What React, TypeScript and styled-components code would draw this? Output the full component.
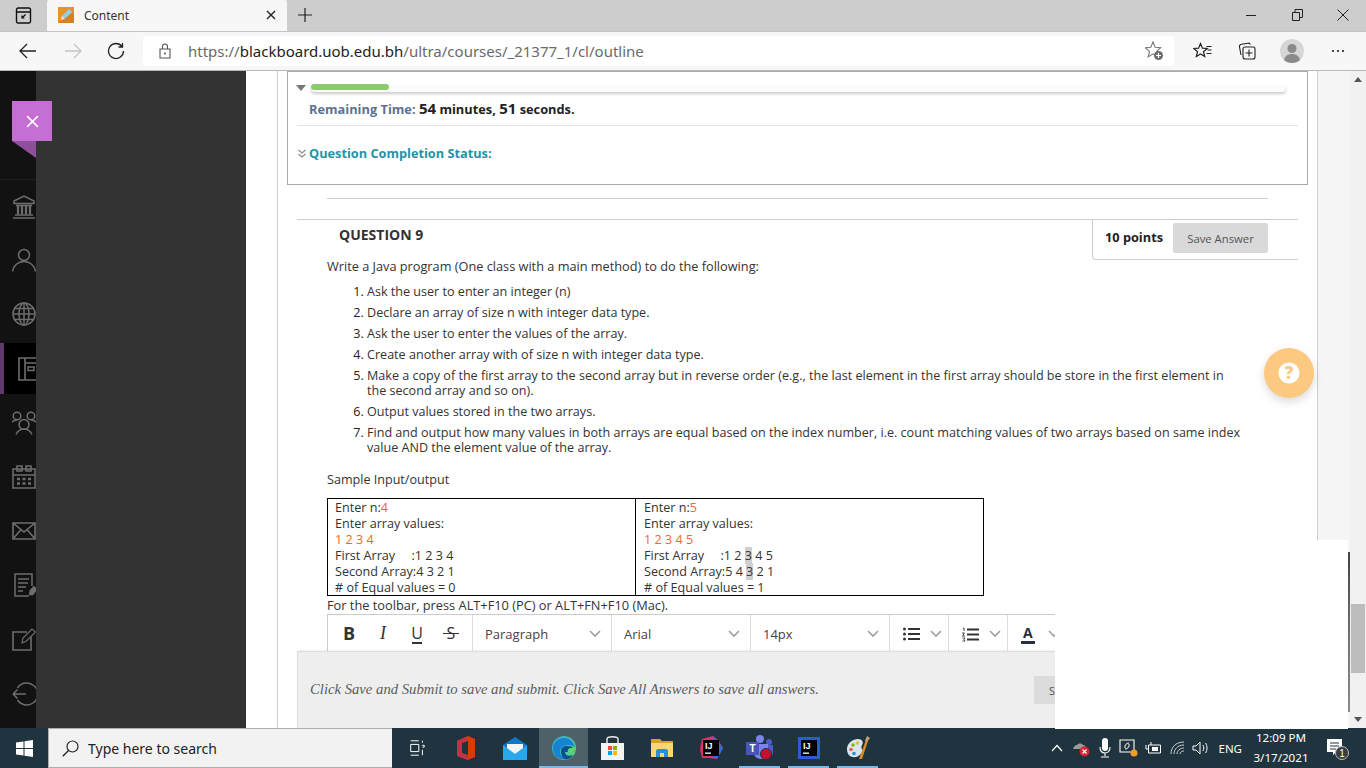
import React from "react";
import styled, { createGlobalStyle } from "styled-components";

const GlobalStyle = createGlobalStyle`
  html, body { margin: 0; padding: 0; background: #fff; }
  #root { width: 1366px; height: 768px; overflow: hidden; }
  * { box-sizing: border-box; }
`;

// window
//--------------------------
const Screen = styled.div`
  position: relative;
  width: 1366px;
  height: 768px;
  display: flex;
  flex-direction: column;
  overflow: hidden;
  font-family: "Open Sans", sans-serif;
`;

const TabStrip = styled.div`
  height: 32px;
  flex: none;
  display: flex;
  align-items: flex-end;
  background: #cdcdcd;
  padding-left: 15px;
  border-bottom: 1px solid #c4c4c4;
`;

const TabAction = styled.div`
  width: 32px;
  height: 32px;
  display: flex;
  align-items: center;
  justify-content: flex-start;
  color: #111;
`;

const Tab = styled.div`
  width: 240px;
  height: 32px;
  background: #f7f7f7;
  border-radius: 4px 4px 0 0;
  display: flex;
  align-items: center;
  padding: 0 11px;
  font-size: 12px;
  color: #333;
`;

const TabTitle = styled.span`
  flex: 1;
  margin-left: 10px;
  font-family: "Noto Sans", sans-serif;
`;

const NewTab = styled.div`
  margin-left: 10px;
  height: 32px;
  display: flex;
  align-items: center;
`;

const WindowControls = styled.div`
  margin-left: auto;
  display: flex;
  height: 32px;
`;

const WindowButton = styled.div`
  width: 46px;
  height: 32px;
  display: flex;
  align-items: center;
  justify-content: center;
`;

const NavBar = styled.div`
  height: 39px;
  flex: none;
  display: flex;
  align-items: center;
  background: #f7f7f7;
  border-bottom: 1px solid #b9b9b9;
  padding-left: 6px;
`;

const NavButton = styled.div<{ $w: number }>`
  width: ${(p) => p.$w}px;
  height: 30px;
  flex: none;
  display: flex;
  align-items: center;
  justify-content: center;
`;

const AddressBar = styled.div`
  width: 1031px;
  height: 30px;
  margin-left: 6px;
  background: #fff;
  border-radius: 4px;
  display: flex;
  align-items: center;
  padding-left: 16px;
  padding-right: 9px;
`;

const Url = styled.div`
  margin-left: 17px;
  flex: 1;
  font-family: "Noto Sans", sans-serif;
  font-size: 15px;
  color: #6a6a6a;
  white-space: nowrap;
`;

const UrlHost = styled.span`
  color: #222;
`;

// page
//--------------------------
const Main = styled.div`
  flex: 1;
  min-height: 0;
  display: flex;
`;

const Rail = styled.div`
  width: 36px;
  flex: none;
  background: #121212;
  padding-top: 105px;
  overflow: hidden;
  display: flex;
  flex-direction: column;
`;

const RailDivider = styled.div`
  height: 4px;
  flex: none;
  border-bottom: 1px solid #1e1e1e;
`;

const RailItem = styled.div<{ $h: number; $active?: boolean }>`
  height: ${(p) => p.$h}px;
  flex: none;
  width: 36px;
  display: flex;
  align-items: center;
  padding-left: ${(p) => (p.$active ? "14px" : "12px")};
  background: ${(p) => (p.$active ? "#000" : "transparent")};
  border-left: ${(p) => (p.$active ? "4px solid #63386e" : "none")};
  margin: ${(p) => (p.$active ? "2.500px 0 1.500px" : "0")};
  svg { flex: none; }
`;

const DarkPanel = styled.div`
  width: 210px;
  flex: none;
  background: #333;
`;

const CloseBadge = styled.div`
  position: absolute;
  left: 12px;
  top: 101px;
  width: 40px;
  height: 40px;
  background: #c56fd5;
  display: flex;
  align-items: center;
  justify-content: center;
  &::after {
    content: "";
    position: absolute;
    left: 0;
    top: 40px;
    width: 0;
    height: 0;
    border-top: 17px solid #8e4f9b;
    border-left: 24px solid transparent;
  }
`;

const LeftGutter = styled.div`
  width: 31px;
  flex: none;
  background: #fff;
`;

const RightGutter = styled.div`
  width: 32px;
  flex: none;
  background: #f5f5f5;
`;

const Sheet = styled.div`
  flex: 1;
  min-width: 0;
  display: flex;
  flex-direction: column;
  background: #fff;
  border-left: 1px solid #cfcfcf;
  border-right: 1px solid #cfcfcf;
`;

const Scroller = styled.div`
  flex: 1;
  min-height: 0;
  overflow: hidden;
  padding: 0 9px;
`;

const StatusBox = styled.div`
  height: 114px;
  border: 1px solid #aaa;
  padding: 0 9px 0 8px;
`;

const ProgressRow = styled.div`
  height: 26px;
  display: flex;
  align-items: flex-start;
  padding-top: 12px;
`;

const Caret = styled.div`
  width: 0;
  height: 0;
  border-left: 5px solid transparent;
  border-right: 5px solid transparent;
  border-top: 6px solid #777;
  margin-top: 1px;
`;

const Track = styled.div`
  width: 975px;
  height: 8px;
  margin-left: 5px;
  border-radius: 4px;
  background: #fbfbfb;
  box-shadow: 0 2px 3px rgba(0, 0, 0, 0.2);
`;

const Fill = styled.div`
  width: 78px;
  height: 6px;
  border-radius: 3px;
  background: #8cc96f;
`;

const TimeRow = styled.div`
  height: 28px;
  margin-left: 1px;
  padding-left: 12px;
  border-bottom: 1px solid #e4e4e4;
  width: 1001px;
  font-size: 12.8px;
  line-height: 20px;
  font-weight: 700;
  color: #222;
  white-space: nowrap;
`;

const TimeLabel = styled.span`
  color: #5d7093;
`;

const TimeNumber = styled.span`
  font-size: 15px;
`;

const CompletionRow = styled.div`
  display: flex;
  align-items: center;
  margin-top: 18px;
  height: 18px;
  gap: 3px;
  padding-left: 2px;
  font-size: 12.75px;
  font-weight: 700;
  color: #1f93a8;
`;

const Rule = styled.div`
  height: 1px;
  margin: 13px 40px 0 40px;
  background: #ccc;
`;

const Question = styled.div`
  margin: 20px 10px 0;
  border-top: 1px solid #ccc;
`;

const QuestionHead = styled.div`
  display: flex;
  justify-content: space-between;
  height: 40px;
`;

const QuestionTitle = styled.div`
  padding: 5px 0 0 42px;
  font-size: 14px;
  line-height: 20px;
  font-weight: 700;
  color: #333;
`;

const PointsBox = styled.div`
  width: 206px;
  height: 40px;
  display: flex;
  align-items: flex-start;
  padding: 3px 0 0 12px;
  border-left: 1px solid #ccc;
  border-bottom: 1px solid #ccc;
  border-bottom-left-radius: 4px;
`;

const Points = styled.div`
  font-size: 12.75px;
  line-height: 28px;
  font-weight: 700;
  color: #222;
  width: 68px;
`;

const SaveAnswer = styled.div`
  width: 95px;
  height: 30px;
  background: #d9d9d9;
  border-radius: 2px;
  display: flex;
  align-items: center;
  justify-content: center;
  font-size: 11.3px;
  color: #555;
`;

const Body = styled.div`
  padding-left: 30px;
  margin-top: -1px;
  font-size: 12.58px;
  line-height: 15px;
  color: #333;
`;

const Lead = styled.div`
  font-size: 12.74px;
  line-height: 15px;
`;

const Steps = styled.ol`
  margin: 10px 0 0;
  padding: 0 55px 0 40px;
  li { margin-bottom: 6px; }
  li::marker { color: #222; }
`;

const SampleLabel = styled.div`
  margin-top: 17px;
`;

const SampleTable = styled.div`
  display: grid;
  grid-template-columns: 307px 348px;
  width: 657px;
  height: 98px;
  margin-top: 11px;
  border: 1px solid #000;
`;

const SampleCell = styled.div`
  padding: 1px 0 0 7px;
  font-size: 12.6px;
  line-height: 16px;
  white-space: pre;
  color: #333;
  & + & {
    border-left: 1px solid #000;
    padding-left: 8px;
  }
`;

const Typed = styled.span`
  color: #f0662b;
`;

const Mark = styled.span`
  background: #cfcfcf;
`;

const Hint = styled.div`
  font-size: 12.8px;
  line-height: 18px;
`;

const Editor = styled.div`
  display: flex;
  align-items: stretch;
  height: 37px;
  width: 800px;
  border-top: 1px solid #ccc;
  border-left: 1px solid #ccc;
`;

const EditorGroup = styled.div<{ $w: number; $tight?: boolean }>`
  width: ${(p) => p.$w}px;
  flex: none;
  display: flex;
  align-items: center;
  justify-content: space-between;
  padding: 2px ${(p) => (p.$tight ? "6px" : "10px")} 0 ${(p) => (p.$tight ? "13px" : "12px")};
  border-right: 1px solid #ddd;
  font-size: 13px;
  color: #444;
`;

const StyleGroup = styled(EditorGroup)`
  padding: 0 10px;
`;

const StyleButton = styled.span<{ $serif?: boolean; $under?: boolean; $strike?: boolean }>`
  position: relative;
  width: 22px;
  text-align: center;
  font-family: ${(p) => (p.$serif ? '"Liberation Serif", serif' : '"Open Sans", sans-serif')};
  font-style: ${(p) => (p.$serif ? "italic" : "normal")};
  font-size: ${(p) => (p.$under || p.$strike ? "16px" : "18px")};
  font-weight: ${(p) => (p.$serif ? 400 : p.$under || p.$strike ? 400 : 700)};
  color: #333;
  ${(p) =>
    p.$under &&
    `&::after {
      content: "";
      position: absolute;
      left: 6px;
      right: 6px;
      bottom: -3px;
      height: 2px;
      background: #333;
    }`}
  ${(p) =>
    p.$strike &&
    `&::after {
      content: "";
      position: absolute;
      left: 3px;
      right: 3px;
      top: 7px;
      height: 1.5px;
      background: #333;
    }`}
`;

const ColorA = styled.span`
  font-size: 14px;
  font-weight: 700;
  line-height: 16px;
  color: #262f3d;
  border-bottom: 3px solid #262f3d;
  padding: 0 2px;
`;

const Footer = styled.div`
  height: 77px;
  flex: none;
  margin-left: 19px;
  background: #eee;
  border-top: 1px solid #ddd;
  border-left: 1px solid #ddd;
  display: flex;
  align-items: center;
  padding: 0 0 0 12px;
  box-shadow: 0 -1px 2px rgba(0, 0, 0, 0.06);
`;

const FooterNote = styled.div`
  width: 724px;
  flex: none;
  margin-bottom: 2px;
  font-family: "Liberation Serif", serif;
  font-style: italic;
  font-size: 14.7px;
  color: #5c5c5c;
  white-space: nowrap;
`;

const FooterButton = styled.div`
  width: 120px;
  height: 28px;
  background: #dcdcdc;
  display: flex;
  align-items: center;
  padding-left: 15px;
  font-size: 11px;
  color: #555;
  white-space: nowrap;
`;

const Scrollbar = styled.div`
  width: 16px;
  flex: none;
  background: #f1f1f1;
  display: flex;
  flex-direction: column;
  align-items: center;
  justify-content: space-between;
  padding: 6px 0 6px;
  position: relative;
`;

const ScrollThumb = styled.div`
  position: absolute;
  left: 1px;
  top: 533px;
  width: 14px;
  height: 69px;
  background: #bcbcbc;
`;

const Arrow = styled.div<{ $down?: boolean }>`
  width: 0;
  height: 0;
  border-left: 4px solid transparent;
  border-right: 4px solid transparent;
  ${(p) => (p.$down ? "border-top: 5px solid #555;" : "border-bottom: 5px solid #555;")}
`;

const HelpButton = styled.div`
  position: absolute;
  left: 1264px;
  top: 348px;
  width: 50px;
  height: 50px;
  border-radius: 50%;
  background: #fdc880;
  box-shadow: 0 4px 10px rgba(0, 0, 0, 0.14);
  display: flex;
  align-items: center;
  justify-content: center;
`;

// white patch lying over the page in the picture
const Patch = styled.div`
  position: absolute;
  left: 1055px;
  top: 540px;
  width: 293px;
  height: 189px;
  background: #fff;
  z-index: 5;
  &::after {
    content: "";
    position: absolute;
    left: 293px;
    top: 12px;
    width: 2px;
    height: 160px;
    background: linear-gradient(#444, #777 60%, #8a8a8a);
  }
`;

// taskbar
//--------------------------
const Taskbar = styled.div`
  height: 40px;
  flex: none;
  display: flex;
  align-items: stretch;
  background: #20343f;
`;

const StartButton = styled.div`
  width: 48px;
  display: flex;
  align-items: center;
  justify-content: center;
`;

const SearchBox = styled.div`
  width: 344px;
  background: #f2f2f2;
  border: 1px solid #a9b1b5;
  border-right: 0;
  display: flex;
  align-items: center;
  padding-left: 13px;
  gap: 9px;
  font-family: "Noto Sans", sans-serif;
  font-size: 14px;
  color: #222;
`;

const TaskItem = styled.div<{ $open?: boolean; $current?: boolean }>`
  width: 49px;
  flex: none;
  display: flex;
  align-items: center;
  justify-content: center;
  background: ${(p) => (p.$current ? "#4e6169" : "transparent")};
  box-shadow: ${(p) => (p.$open ? "inset 0 -2px 0 #76b9ed" : "none")};
  background-clip: padding-box;
  border: ${(p) => (p.$open ? "0 solid transparent" : "none")};
  border-width: ${(p) => (p.$open && !p.$current ? "0 4px" : "0")};
`;

const Tray = styled.div`
  margin-left: auto;
  display: flex;
  align-items: center;
  color: #fff;
`;

const TrayIcon = styled.div<{ $w: number }>`
  width: ${(p) => p.$w}px;
  display: flex;
  justify-content: center;
`;

const TrayText = styled.div`
  font-family: "Noto Sans", sans-serif;
  font-size: 11.5px;
  color: #fff;
  width: 33px;
  text-align: right;
`;

const Clock = styled.div`
  width: 78px;
  font-family: "Noto Sans", sans-serif;
  font-size: 11.6px;
  line-height: 20px;
  text-align: center;
  color: #fff;
`;

const Notify = styled.div`
  width: 46px;
  display: flex;
  padding-left: 5px;
`;

// icons
//--------------------------
const Ico = styled.svg`
  display: block;
  flex: none;
`;

const railStroke = { fill: "none", stroke: "#6e6e6e", strokeWidth: 1.5 };

const railIcons: React.ReactNode[] = [
  <g {...railStroke}>
    <path d="M2 6 12 1l10 5v2.500H2zM3 20h18M1 23h22M4 10.500h16" />
    <path d="M6 11v8M10 11v8M14 11v8M18 11v8" strokeWidth="2.200" />
  </g>,
  <g {...railStroke}>
    <circle cx="12" cy="7" r="5.500" />
    <path d="M0.500 23.500c1-6 5.500-10 11.500-10s10.500 4 11.500 10" />
  </g>,
  <g {...railStroke}>
    <circle cx="12" cy="12" r="11" />
    <ellipse cx="12" cy="12" rx="5" ry="11" />
    <path d="M12 1v22M1 12h22M2.500 6.500h19M2.500 17.500h19" />
  </g>,
  <g {...railStroke}>
    <path d="M1 1h24v22H1zM7 1v22M7 6h18" strokeWidth="1.600" />
    <rect x="10" y="10" width="6" height="3.500" />
  </g>,
  <g {...railStroke}>
    <circle cx="5" cy="5" r="3.800" />
    <circle cx="19" cy="5" r="3.800" />
    <circle cx="12" cy="13.500" r="5" />
    <path d="M0 11c1.500-1.500 3-2 5-2M24 11c-1.500-1.500-3-2-5-2M4 23.500c2-4 4.500-5.500 8-5.500s6 1.500 8 5.500" />
  </g>,
  <g {...railStroke}>
    <path d="M1 4h22v19H1zM1 10h22" />
    <rect x="5" y="1" width="5" height="5" />
    <rect x="14" y="1" width="5" height="5" />
    <path d="M5 14h3M10.500 14h3M16 14h3M5 18.500h3M10.500 18.500h3M16 18.500h3" strokeWidth="2.500" />
  </g>,
  <g {...railStroke}>
    <path d="M1 4h22v16H1zM1 4l11 9 11-9M1 20l8-9.500M23 20l-8-9.500" strokeWidth="1.600" />
  </g>,
  <g {...railStroke}>
    <path d="M20 13V1H3v22h14M6 6h11M6 10h10M6 14h8M6 18h5" />
    <path d="M17 22l1-5 4-4 2 2v3l-3 4z" fill="#6e6e6e" strokeWidth="0.500" />
  </g>,
  <g {...railStroke}>
    <path d="M19 10v13H1V5h14" strokeWidth="1.600" />
    <path d="M10 16l1-5 9-9 3.500 3-9 9z" strokeWidth="1.200" />
  </g>,
  <g {...railStroke}>
    <path d="M5.500 6A11 11 0 1 1 5.500 18M1 12h13M1 12l4.500-4.500M1 12l4.500 4.500" />
  </g>,
];

const Chevron = () => (
  <Ico width="12" height="8" viewBox="0 0 12 8">
    <path d="M1 1l5 5 5-5" fill="none" stroke="#9aa0a6" strokeWidth="1.600" />
  </Ico>
);

const Office = () => (
  <Ico width="20" height="24" viewBox="0 0 20 24">
    <path d="M1 5 12 0l7 3v18l-7 3-11-4z" fill="#d83b01" />
    <path d="M1 5 12 0v5L6 7v10l6 2v5L1 20z" fill="#c4314b" />
    <path d="M6 7l6-2v14l-6-2z" fill="#20343f" />
  </Ico>
);

const Mail = () => (
  <Ico width="24" height="24" viewBox="0 0 24 24">
    <path d="M0 9 12 1l12 8v14H0z" fill="#0f78c9" />
    <path d="M4 8h16v7l-8 3-8-3z" fill="#f4f4f4" />
    <path d="M0 9l12 9 12-9v15H0z" fill="#28a8ea" />
  </Ico>
);

const Edge = () => (
  <Ico width="24" height="24" viewBox="0 0 24 24">
    <defs>
      <linearGradient id="edgeA" x1="0" y1="0" x2="1" y2="1">
        <stop offset="0" stopColor="#2fa8dc" />
        <stop offset="1" stopColor="#60d96b" />
      </linearGradient>
    </defs>
    <circle cx="12" cy="12" r="12" fill="url(#edgeA)" />
    <path d="M1 14C0 7 6 2 12 2c5 0 9 3 11 9-3-2-7-3-11-1-4 2-5 6-3 9 1 2 4 4 7 4C8 25 2 21 1 14z" fill="#1684d3" />
    <path d="M9 15c0-3 3-5 6-5 4 0 6 1 8 3 0 2-1 3-3 3h-7c0 3 3 5 8 3-2 3-5 5-8 4-3-1-4-5-4-8z" fill="#0d4f95" />
    <path d="M23 11c1 3-1 5-3 5h-4c-1-2 1-4 3-4 2 0 3-1 4-1z" fill="#5ad86a" />
  </Ico>
);

const Store = () => (
  <Ico width="23" height="24" viewBox="0 0 23 24">
    <path d="M6 8V3c0-3 11-3 11 0v5" fill="none" stroke="#e8e8e8" strokeWidth="1.500" />
    <path d="M0 7h23v17H0z" fill="#f3f3f3" />
    <path d="M7 10h4v4H7z" fill="#f25022" />
    <path d="M12 10h4v4h-4z" fill="#7fba00" />
    <path d="M7 15h4v4H7z" fill="#00a4ef" />
    <path d="M12 15h4v4h-4z" fill="#ffb900" />
  </Ico>
);

const Explorer = () => (
  <Ico width="22" height="20" viewBox="0 0 22 20">
    <path d="M0 1h9l2 2h11v16H0z" fill="#d9a520" />
    <path d="M0 5h22v14H0z" fill="#f8d775" />
    <path d="M5 19v-6c0-1 1-2 2-2h8c1 0 2 1 2 2v6h-4v-4H9v4z" fill="#2a8fd9" />
  </Ico>
);

const Idea = ({ ring }: { ring?: boolean }) => (
  <Ico width="24" height="24" viewBox="0 0 24 24">
    {ring ? (
      <>
        <path d="M3 3l11-3 5 4 5 8-6 11-8-1H3L1 13z" fill="#e1316c" />
        <path d="M14 0l10 12-6 11-5-3z" fill="#2d6fdc" />
      </>
    ) : (
      <path d="M1 1h22v22H1z" fill="#2a5cd6" />
    )}
    <path d="M4 4h16v16H4z" fill="#000" />
    <text x="6" y="12.500" fontSize="9" fontWeight="700" fontFamily="Liberation Sans, sans-serif" fill="#fff">IJ</text>
    <path d="M6 16.500h6v1.300H6z" fill="#fff" />
  </Ico>
);

const Teams = () => (
  <Ico width="28" height="26" viewBox="0 0 28 26">
    <circle cx="14" cy="4" r="4" fill="#7b83eb" />
    <circle cx="23" cy="7" r="3" fill="#5059c9" />
    <path d="M18 10h9v8c0 2-2 3-4 3h-5z" fill="#5059c9" />
    <path d="M8 9h14v10c0 3-3 5-7 5s-7-3-7-6z" fill="#7b83eb" />
    <path d="M0 7h13v13H0z" fill="#4b53bc" />
    <text x="6.500" y="17" textAnchor="middle" fontSize="10" fontWeight="700" fontFamily="Liberation Sans, sans-serif" fill="#fff">T</text>
    <circle cx="20" cy="19" r="5.500" fill="#c50f2e" stroke="#20343f" />
  </Ico>
);

const Palette = () => (
  <Ico width="24" height="26" viewBox="0 0 24 26">
    <path d="M1 14c0-6 6-10 11-10 4 0 6 3 4 6-1 2-1 4 1 5-2 5-6 8-10 7-4 0-6-4-6-8z" fill="#d9e6ee" />
    <circle cx="7" cy="10" r="1.800" fill="#7fba00" />
    <circle cx="11.500" cy="8" r="1.800" fill="#e8b83a" />
    <circle cx="5" cy="14.500" r="1.800" fill="#e85a4f" />
    <circle cx="8" cy="18.500" r="1.800" fill="#2a8fd9" />
    <path d="M13 24 20 5l2 1-6 18z" fill="#e08a2c" />
    <path d="M19 6l2-5 3 2-3 4z" fill="#c9a06a" />
  </Ico>
);

const taskItems: { node: React.ReactNode; open?: boolean; current?: boolean }[] = [
  {
    node: (
      <Ico width="18" height="18" viewBox="0 0 20 20">
        <path d="M3 2h9M3 18h9M3 6h9v8H3zM16 2v2M16 7h2v2h-2M16 12v6" fill="none" stroke="#fff" strokeWidth="1.100" />
      </Ico>
    ),
  },
  { node: <Office /> },
  { node: <Mail /> },
  { node: <Edge />, open: true, current: true },
  { node: <Store /> },
  { node: <Explorer /> },
  { node: <Idea ring /> },
  { node: <Teams />, open: true },
  { node: <Idea />, open: true },
  { node: <Palette />, open: true },
];

const StarPlus = () => (
  <Ico width="20" height="22" viewBox="0 0 20 22">
    <path d="M8 2l2.200 5.300 5.500.4-4.200 3.700 1.300 5.500L8 13.900l-4.800 3 1.300-5.500L.3 7.700l5.500-.4z" fill="none" stroke="#777" strokeWidth="1.100" />
    <circle cx="13.500" cy="15.500" r="4.500" fill="#6b6b6b" />
    <path d="M13.500 13v5M11 15.500h5" stroke="#fff" strokeWidth="1.200" />
  </Ico>
);

const railHeight = (i: number) => (i === 3 ? 51 : i < 3 ? 53.5 : 54.2);

export default function App() {
  return (
    <Screen>
      <GlobalStyle />
      <TabStrip>
        <TabAction>
          <Ico width="17" height="17" viewBox="0 0 17 17">
            <path d="M3 1h11a1.500 1.500 0 0 1 1.500 1.500v12a1.500 1.500 0 0 1-1.500 1.500H3a1.500 1.500 0 0 1-1.500-1.500v-12A1.500 1.500 0 0 1 3 1zM1.500 5h14" fill="none" stroke="#111" strokeWidth="1.400" />
            <path d="M10.500 7.500 7 11M7 8.500V11h2.500" fill="none" stroke="#111" strokeWidth="1.200" />
          </Ico>
        </TabAction>
        <Tab>
          <Ico width="16" height="16" viewBox="0 0 16 16">
            <path d="M0 0h16v16H0z" fill="#e8912d" />
            <path d="M3 13l1-4 7-7 3 3-7 7z" fill="#8fd0ea" />
            <path d="M3 13l1-4 3 3z" fill="#f7e2b0" />
            <path d="M0 16 16 5v11z" fill="#c9741c" opacity="0.600" />
          </Ico>
          <TabTitle>Content</TabTitle>
          <Ico width="10" height="10" viewBox="0 0 10 10">
            <path d="M1 1l8 8M9 1 1 9" stroke="#222" strokeWidth="1.400" />
          </Ico>
        </Tab>
        <NewTab>
          <Ico width="16" height="16" viewBox="0 0 16 16">
            <path d="M8 1v14M1 8h14" stroke="#222" strokeWidth="1.200" />
          </Ico>
        </NewTab>
        <WindowControls>
          <WindowButton>
            <Ico width="10" height="10" viewBox="0 0 10 10">
              <path d="M0 5.500h10" stroke="#222" strokeWidth="1" />
            </Ico>
          </WindowButton>
          <WindowButton>
            <Ico width="11" height="12" viewBox="0 0 11 12">
              <path d="M.5 3.500h7v8h-7zM3 3.500V.5h7.500v8h-3" fill="none" stroke="#222" strokeWidth="1" />
            </Ico>
          </WindowButton>
          <WindowButton>
            <Ico width="12" height="12" viewBox="0 0 12 12">
              <path d="M.5.500l11 11M11.500.500l-11 11" stroke="#222" strokeWidth="1" />
            </Ico>
          </WindowButton>
        </WindowControls>
      </TabStrip>
      <NavBar>
        <NavButton $w={44}>
          <Ico width="18" height="16" viewBox="0 0 18 16">
            <path d="M17 8H1M8 1 1 8l7 7" fill="none" stroke="#222" strokeWidth="1.300" />
          </Ico>
        </NavButton>
        <NavButton $w={45}>
          <Ico width="18" height="16" viewBox="0 0 18 16">
            <path d="M1 8h16M10 1l7 7-7 7" fill="none" stroke="#c4c4c4" strokeWidth="1.300" />
          </Ico>
        </NavButton>
        <NavButton $w={42}>
          <Ico width="18" height="18" viewBox="0 0 18 18">
            <path d="M15 4.500A7.500 7.500 0 1 0 16.500 9M15.500 1v4h-4" fill="none" stroke="#222" strokeWidth="1.300" />
          </Ico>
        </NavButton>
        <AddressBar>
          <Ico width="12" height="16" viewBox="0 0 12 16">
            <path d="M1 6h10v9H1zM3.500 6V3.500a2.500 2.500 0 0 1 5 0V6" fill="none" stroke="#555" strokeWidth="1.100" />
            <circle cx="6" cy="10.500" r="1" fill="#555" />
          </Ico>
          <Url>
            https://<UrlHost>blackboard.uob.edu.bh</UrlHost>/ultra/courses/_21377_1/cl/outline
          </Url>
          <StarPlus />
        </AddressBar>
        <NavButton $w={56}>
          <Ico width="19" height="18" viewBox="0 0 18 18">
            <path d="M7 1.500l1.900 4.700 4.800.3-3.700 3.200 1.200 4.800L7 12l-4.200 2.500L4 9.700.3 6.500l4.800-.3z" fill="none" stroke="#222" strokeWidth="1.200" />
            <path d="M13 4.500h5M14 8h4M13 11.500h5" stroke="#222" strokeWidth="1.100" />
          </Ico>
        </NavButton>
        <NavButton $w={33}>
          <Ico width="18" height="18" viewBox="0 0 18 18">
            <path d="M3 13 1.500 5C1.300 3.500 2 2.500 3.500 2.300L10 1.200c1.200-.2 2 .3 2.400 1.300" fill="none" stroke="#222" strokeWidth="1.100" />
            <rect x="5" y="5" width="12" height="12" rx="2" fill="#f7f7f7" stroke="#222" strokeWidth="1.100" />
            <path d="M11 7.500v7M7.500 11h7" stroke="#222" strokeWidth="1.100" />
          </Ico>
        </NavButton>
        <NavButton $w={57}>
          <Ico width="24" height="24" viewBox="0 0 24 24">
            <circle cx="12" cy="12" r="12" fill="#d6d6d6" />
            <circle cx="12" cy="9.500" r="4.500" fill="#8a8a8a" />
            <path d="M4 21c1-4 4-6 8-6s7 2 8 6c-2 2-5 3-8 3s-6-1-8-3z" fill="#8a8a8a" />
          </Ico>
        </NavButton>
        <NavButton $w={36}>
          <Ico width="14" height="4" viewBox="0 0 14 4">
            <circle cx="2" cy="2" r="1.100" fill="#222" />
            <circle cx="7" cy="2" r="1.100" fill="#222" />
            <circle cx="12" cy="2" r="1.100" fill="#222" />
          </Ico>
        </NavButton>
      </NavBar>

      <Main>
        <Rail>
          <RailDivider />
          {railIcons.map((icon, i) => (
            <RailItem key={i} $active={i === 3} $h={railHeight(i)}>
              <Ico width="24" height="24" viewBox="0 0 24 24">
                {icon}
              </Ico>
            </RailItem>
          ))}
        </Rail>
        <DarkPanel />
        <LeftGutter />
        <Sheet>
          <Scroller>
            <StatusBox>
              <ProgressRow>
                <Caret />
                <Track>
                  <Fill />
                </Track>
              </ProgressRow>
              <TimeRow>
                <TimeLabel>Remaining Time:</TimeLabel> <TimeNumber>54</TimeNumber> minutes, <TimeNumber>51</TimeNumber> seconds.
              </TimeRow>
              <CompletionRow>
                <Ico width="8" height="9" viewBox="0 0 8 9">
                  <path d="M.5 1 4 4l3.500-3M.5 5 4 8l3.500-3" fill="none" stroke="#888" strokeWidth="1.100" />
                </Ico>
                Question Completion Status:
              </CompletionRow>
            </StatusBox>
            <Rule />
            <Question>
              <QuestionHead>
                <QuestionTitle>QUESTION 9</QuestionTitle>
                <PointsBox>
                  <Points>10 points</Points>
                  <SaveAnswer>Save Answer</SaveAnswer>
                </PointsBox>
              </QuestionHead>
              <Body>
                <Lead>Write a Java program (One class with a main method) to do the following:</Lead>
                <Steps>
                  <li>Ask the user to enter an integer (n)</li>
                  <li>Declare an array of size n with integer data type.</li>
                  <li>Ask the user to enter the values of the array.</li>
                  <li>Create another array with of size n with integer data type.</li>
                  <li>Make a copy of the first array to the second array but in reverse order (e.g., the last element in the first array should be store in the first element in the second array and so on).</li>
                  <li>Output values stored in the two arrays.</li>
                  <li>Find and output how many values in both arrays are equal based on the index number, i.e. count matching values of two arrays based on same index value AND the element value of the array.</li>
                </Steps>
                <SampleLabel>Sample Input/output</SampleLabel>
                <SampleTable>
                  <SampleCell>
                    Enter n:<Typed>4</Typed>
                    {"\n"}Enter array values:
                    {"\n"}<Typed>1 2 3 4</Typed>
                    {"\n"}First Array     :1 2 3 4
                    {"\n"}Second Array:4 3 2 1
                    {"\n"}# of Equal values = 0
                  </SampleCell>
                  <SampleCell>
                    Enter n:<Typed>5</Typed>
                    {"\n"}Enter array values:
                    {"\n"}<Typed>1 2 3 4 5</Typed>
                    {"\n"}First Array     :1 2 <Mark>3</Mark> 4 5
                    {"\n"}Second Array:5 4 <Mark>3</Mark> 2 1
                    {"\n"}# of Equal values = 1
                  </SampleCell>
                </SampleTable>
                <Hint>For the toolbar, press ALT+F10 (PC) or ALT+FN+F10 (Mac).</Hint>
                <Editor>
                  <StyleGroup $w={145}>
                    <StyleButton>B</StyleButton>
                    <StyleButton $serif>I</StyleButton>
                    <StyleButton $under>U</StyleButton>
                    <StyleButton $strike>S</StyleButton>
                  </StyleGroup>
                  <EditorGroup $w={139}>
                    Paragraph
                    <Chevron />
                  </EditorGroup>
                  <EditorGroup $w={139}>
                    Arial
                    <Chevron />
                  </EditorGroup>
                  <EditorGroup $w={139}>
                    14px
                    <Chevron />
                  </EditorGroup>
                  <EditorGroup $w={59} $tight>
                    <Ico width="17" height="14" viewBox="0 0 17 14">
                      <path d="M5 2h12M5 7h12M5 12h12" stroke="#333" strokeWidth="2" />
                      <circle cx="1.500" cy="2" r="1.500" fill="#333" />
                      <circle cx="1.500" cy="7" r="1.500" fill="#333" />
                      <circle cx="1.500" cy="12" r="1.500" fill="#333" />
                    </Ico>
                    <Chevron />
                  </EditorGroup>
                  <EditorGroup $w={59} $tight>
                    <Ico width="17" height="15" viewBox="0 0 17 15">
                      <path d="M5 2.500h12M5 7.500h12M5 12.500h12" stroke="#333" strokeWidth="2" />
                      <path d="M1 1.500 2 1v3M0 6h2.500L.5 9h2.500M.5 11h2.500l-1 1.500 1 1.500H.5" fill="none" stroke="#333" strokeWidth="0.900" />
                    </Ico>
                    <Chevron />
                  </EditorGroup>
                  <EditorGroup $w={59} $tight>
                    <ColorA>A</ColorA>
                    <Chevron />
                  </EditorGroup>
                </Editor>
              </Body>
            </Question>
          </Scroller>
          <Footer>
            <FooterNote>Click Save and Submit to save and submit. Click Save All Answers to save all answers.</FooterNote>
            <FooterButton>Save All Answers</FooterButton>
          </Footer>
        </Sheet>
        <RightGutter />
        <Scrollbar>
          <Arrow />
          <ScrollThumb />
          <Arrow $down />
        </Scrollbar>
      </Main>

      <Taskbar>
        <StartButton>
          <Ico width="17" height="17" viewBox="0 0 17 17">
            <path d="M0 2.500 7.500 1.400v6.600H0zM8.500 1.300 17 0v8H8.500zM0 9h7.500v6.600L0 14.500zM8.500 9H17v8l-8.500-1.300z" fill="#fff" />
          </Ico>
        </StartButton>
        <SearchBox>
          <Ico width="17" height="17" viewBox="0 0 17 17">
            <circle cx="10.500" cy="6.500" r="5.500" fill="none" stroke="#222" strokeWidth="1.200" />
            <path d="M6.500 10.500.8 16.300" stroke="#222" strokeWidth="1.300" />
          </Ico>
          Type here to search
        </SearchBox>
        {taskItems.map((item, i) => (
          <TaskItem key={i} $open={item.open} $current={item.current}>
            {item.node}
          </TaskItem>
        ))}
        <Tray>
          <TrayIcon $w={24}>
            <Ico width="12" height="8" viewBox="0 0 12 8">
              <path d="M1 7l5-5.500L11 7" fill="none" stroke="#fff" strokeWidth="1.200" />
            </Ico>
          </TrayIcon>
          <TrayIcon $w={24}>
            <Ico width="18" height="18" viewBox="0 0 18 18">
              <path d="M1 11c0-3 2-5 4-5 1-2 5-2 6 0 2 0 3 2 3 4H1z" fill="#9a9a9a" />
              <circle cx="12.500" cy="12.500" r="5" fill="#d8222f" />
              <path d="M10.500 10.500l4 4M14.500 10.500l-4 4" stroke="#fff" strokeWidth="1.200" />
            </Ico>
          </TrayIcon>
          <TrayIcon $w={23}>
            <Ico width="12" height="20" viewBox="0 0 12 20">
              <rect x="3" y="0" width="6" height="13" rx="3" fill="#fff" />
              <path d="M1 9c0 4 2 6 5 6s5-2 5-6M6 15v3M2 19h8" fill="none" stroke="#fff" strokeWidth="1.100" />
            </Ico>
          </TrayIcon>
          <TrayIcon $w={25}>
            <Ico width="20" height="18" viewBox="0 0 20 18">
              <path d="M1 1h14v12H1z" fill="none" stroke="#fff" strokeWidth="1.100" />
              <path d="M10 4a4 4 0 0 0-4 5M6 10a4 4 0 0 0 4-5" fill="none" stroke="#fff" />
              <circle cx="15" cy="14" r="3.500" fill="#f59a23" />
            </Ico>
          </TrayIcon>
          <TrayIcon $w={23}>
            <Ico width="16" height="12" viewBox="0 0 16 12">
              <path d="M3.500 3h12v8h-12zM6 0v3M1 3v4h3" fill="none" stroke="#fff" />
              <path d="M7 5h6v4H7z" fill="#fff" />
            </Ico>
          </TrayIcon>
          <TrayIcon $w={27}>
            <Ico width="16" height="14" viewBox="0 0 16 14">
              <path d="M1 13C1 6 6 1 14 1M4 13c0-5 4-9 10-9M7 13c0-3 3-6 7-6M10 13c0-2 2-3 4-3" fill="none" stroke="#c8cdd0" />
            </Ico>
          </TrayIcon>
          <TrayIcon $w={18}>
            <Ico width="16" height="14" viewBox="0 0 16 14">
              <path d="M1 5h3l4-4v12L4 9H1zM11 4c1 2 1 4 0 6M13.500 2c2 3 2 7 0 10" fill="none" stroke="#fff" />
            </Ico>
          </TrayIcon>
          <TrayText>ENG</TrayText>
          <Clock>
            12:09 PM
            <br />
            3/17/2021
          </Clock>
          <Notify>
            <Ico width="24" height="24" viewBox="0 0 24 24">
              <path d="M2 3h15v13h-6l-3 3v-3H2z" fill="#fff" />
              <path d="M5 7h9M5 10h9M5 13h6" stroke="#20343f" />
              <circle cx="17" cy="17" r="6.500" fill="#3c3c3c" stroke="#bbb" />
              <text x="17" y="20.500" textAnchor="middle" fontSize="10" fontFamily="Liberation Sans, sans-serif" fill="#fff">1</text>
            </Ico>
          </Notify>
        </Tray>
      </Taskbar>

      <CloseBadge>
        <Ico width="13" height="13" viewBox="0 0 12 12">
          <path d="M1 1l10 10M11 1 1 11" stroke="#fff" strokeWidth="1.500" />
        </Ico>
      </CloseBadge>
      <HelpButton>
        <Ico width="22" height="22" viewBox="0 0 22 22">
          <circle cx="11" cy="11" r="10.500" fill="#fff" />
          <text x="11" y="17" textAnchor="middle" fontSize="17" fontWeight="800" fontFamily="Open Sans, sans-serif" fill="#fdc880">?</text>
        </Ico>
      </HelpButton>
      <Patch />
    </Screen>
  );
}
